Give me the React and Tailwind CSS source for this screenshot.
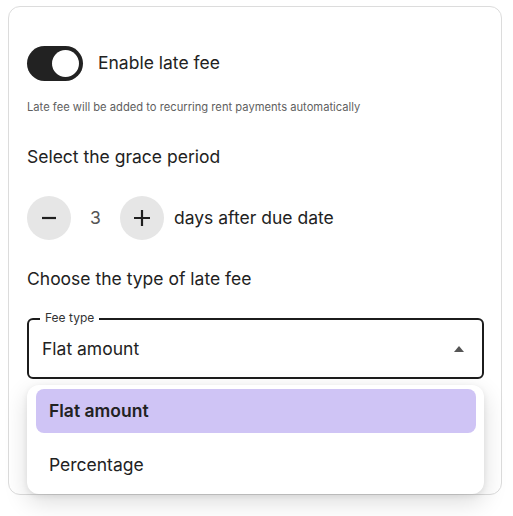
import { useState } from "react";

const Toggle = ({ on, onChange }) => (
  <button
    onClick={() => onChange(!on)}
    className={`w-[56px] h-[35px] rounded-full flex items-center px-[4px] ${
      on ? "bg-[#222222] justify-end" : "bg-[#d4d4d4] justify-start"
    }`}
  >
    <span className="block size-[27px] rounded-full bg-white" />
  </button>
);

const RoundButton = ({ children, onClick }) => (
  <button
    onClick={onClick}
    className="size-[44px] rounded-full bg-[#e6e6e6] flex items-center justify-center text-[#1f1f1f]"
  >
    {children}
  </button>
);

export default function App() {
  const [enabled, setEnabled] = useState(true);
  const [days, setDays] = useState(3);
  const [feeType, setFeeType] = useState("Flat amount");
  const options = ["Flat amount", "Percentage"];

  return (
    <div className="w-[513px] h-[516px] bg-white pt-[6px] pl-[8px] font-['Inter','Noto_Sans',sans-serif] text-[#222222]">
      <div className="relative w-[494px] h-[489px] rounded-[12px] border border-[#dcdcdc] bg-white pl-[18px] pr-[17px] pt-[39px]">
        <div className="flex items-center gap-[15px]">
          <Toggle on={enabled} onChange={setEnabled} />
          <span className="text-[17.5px]">Enable late fee</span>
        </div>

        <p className="mt-[18px] text-[11.2px] text-[#5f5f5f]">
          Late fee will be added to recurring rent payments automatically
        </p>

        <p className="mt-[28px] text-[17.5px]">Select the grace period</p>

        <div className="mt-[26px] flex items-center">
          <RoundButton onClick={() => setDays(Math.max(0, days - 1))}>
            <svg width="16" height="16" viewBox="0 0 16 16">
              <path d="M1 8h14" stroke="currentColor" strokeWidth="2.2" />
            </svg>
          </RoundButton>
          <span className="w-[49px] text-center text-[17.5px] text-[#555555]">{days}</span>
          <RoundButton onClick={() => setDays(days + 1)}>
            <svg width="18" height="18" viewBox="0 0 18 18">
              <path d="M1 9h16M9 1v16" stroke="currentColor" strokeWidth="2.2" />
            </svg>
          </RoundButton>
          <span className="ml-[10px] text-[17.5px]">days after due date</span>
        </div>

        <p className="mt-[26px] text-[17.5px]">Choose the type of late fee</p>

        <div className="relative mt-[26px] h-[61px] rounded-[6px] border-2 border-[#1c1c1c] flex items-center pl-[13px] pr-[18px]">
          <span className="absolute -top-[10px] left-[11px] bg-white px-[5px] text-[12px] leading-[16px] text-[#333333]">
            Fee type
          </span>
          <span className="flex-1 text-[17.5px]">{feeType}</span>
          <svg width="10" height="6" viewBox="0 0 10 6" className="text-[#555555]">
            <path d="M0 6L5 0L10 6Z" fill="currentColor" />
          </svg>

          <div className="absolute left-[-2px] right-[-2px] top-[65px] rounded-[12px] bg-white pt-[4px] pb-[7px] pl-[9px] pr-[8px] shadow-[0_8px_24px_rgba(0,0,0,0.14),0_2px_6px_rgba(0,0,0,0.08)]">
            {options.map((o) => (
              <div
                key={o}
                onClick={() => setFeeType(o)}
                className={`h-[44px] flex items-center px-[13px] rounded-[8px] text-[17.5px] cursor-pointer ${
                  o === feeType ? "bg-[#cfc4f5] font-semibold" : "mt-[10px]"
                }`}
              >
                {o}
              </div>
            ))}
          </div>
        </div>
      </div>
    </div>
  );
}
